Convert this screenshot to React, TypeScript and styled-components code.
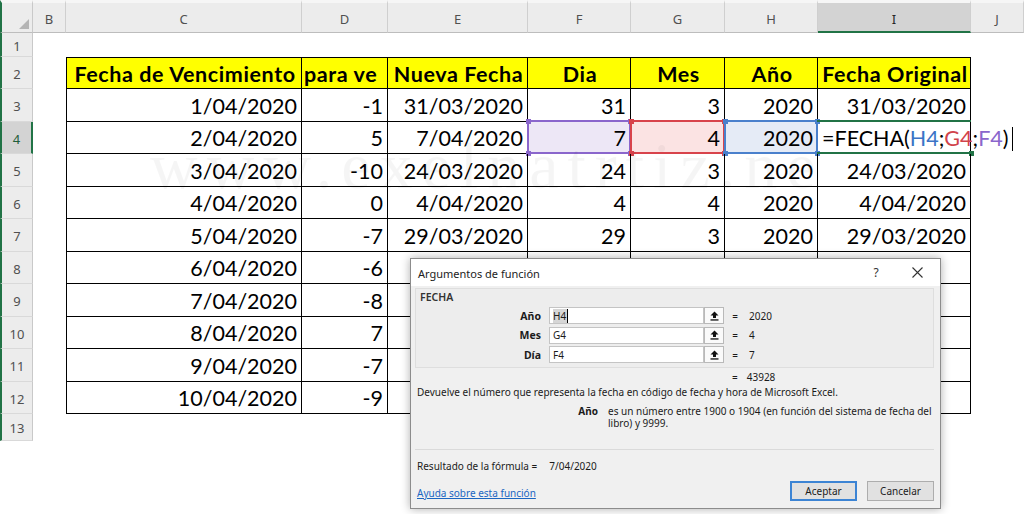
import React from 'react';
import styled, { createGlobalStyle, css } from 'styled-components';

const GlobalStyle = createGlobalStyle`
  html, body { margin: 0; padding: 0; background: #fff; }
  body { width: 1024px; height: 514px; overflow: hidden; font-family: Lato, "Liberation Sans", sans-serif; }
`;

const COLS = '33px 33px 236px 86px 140px 103px 94px 93px 153px 53px';
const ROWS = '33px 24px 32px 33px 32px 33px 32px 33px 32px 33px 32px 33px 32px 27px';
const GREEN = '#217346';

const Page = styled.div`
  position: relative;
  width: 1024px;
  height: 514px;
  overflow: hidden;
  background: #fff;
`;

const Sheet = styled.div`
  display: grid;
  grid-template-columns: ${COLS};
  grid-template-rows: ${ROWS};
`;

const Corner = styled.div`
  position: relative;
  box-sizing: border-box;
  background: #ececec;
  border-left: 2px solid ${GREEN};
  border-right: 1px solid #c9c9c9;
  border-bottom: 1px solid #bdbdbd;
  border-top: 3px solid #f6f6f6;
`;

const CornerTriangle = styled.svg`
  position: absolute;
  right: 3px;
  bottom: 3px;
`;

const ColHeader = styled.div<{ $active?: boolean }>`
  box-sizing: border-box;
  display: flex;
  align-items: center;
  justify-content: center;
  padding-top: 3px;
  background: ${p => (p.$active ? '#d3d3d3' : '#ececec')};
  border-top: 3px solid #f6f6f6;
  border-right: 1px solid #cfcfcf;
  border-bottom: ${p => (p.$active ? `2px solid ${GREEN}` : '1px solid #bdbdbd')};
  font-family: "Noto Sans", "Open Sans", sans-serif;
  font-size: 13px;
  color: ${p => (p.$active ? '#262626' : '#505050')};
  white-space: nowrap;
  overflow: hidden;
`;

const RowHeader = styled.div<{ $active?: boolean }>`
  box-sizing: border-box;
  display: flex;
  align-items: center;
  justify-content: center;
  padding-top: 2px;
  background: ${p => (p.$active ? '#d3d3d3' : '#ececec')};
  border-left: 2px solid ${GREEN};
  border-right: ${p => (p.$active ? `2px solid ${GREEN}` : '1px solid #c9c9c9')};
  border-bottom: 1px solid #d9d9d9;
  font-family: "Noto Sans", "Open Sans", sans-serif;
  font-size: 13px;
  color: ${p => (p.$active ? '#1f5e3a' : '#505050')};
`;

type Align = 'left' | 'right' | 'center';

const Cell = styled.div<{
  $table?: boolean;
  $first?: boolean;
  $topRow?: boolean;
  $head?: boolean;
  $align?: Align;
  $fill?: string;
}>`
  position: relative;
  box-sizing: border-box;
  display: flex;
  align-items: center;
  justify-content: ${p => (p.$align === 'left' ? 'flex-start' : p.$align === 'center' ? 'center' : 'flex-end')};
  padding: ${p => (p.$head ? '1px 0 0 2px' : '1px 4px 0 4px')};
  font-size: 21.5px;
  color: #000;
  white-space: nowrap;
  background: ${p => p.$fill || (p.$head ? '#ffff00' : 'transparent')};
  font-weight: ${p => (p.$head ? 700 : 400)};
  letter-spacing: ${p => (p.$head ? '0.6px' : '0')};
  ${p =>
    p.$table &&
    css`
      border-right: 1px solid #000;
      border-bottom: 1px solid #000;
    `}
  ${p =>
    p.$first &&
    css`
      border-left: 1px solid #000;
    `}
  ${p =>
    p.$topRow &&
    css`
      border-top: 1px solid #000;
    `}
`;

const Clip = styled.span`
  overflow: hidden;
  display: block;
`;

const RefFrame = styled.div<{ $color: string }>`
  position: absolute;
  top: -2px;
  left: -1px;
  right: -1px;
  bottom: -1px;
  border: 2px solid ${p => p.$color};
  pointer-events: none;
`;

const Handle = styled.div<{ $color: string; $v: 'top' | 'bottom'; $h: 'left' | 'right' }>`
  position: absolute;
  width: 5px;
  height: 5px;
  background: ${p => p.$color};
  ${p => (p.$v === 'top' ? 'top: -3.5px;' : 'bottom: -3.5px;')}
  ${p => (p.$h === 'left' ? 'left: -3.5px;' : 'right: -3.5px;')}
`;

const EditFrame = styled.div`
  position: absolute;
  top: -2px;
  left: -1px;
  right: -1px;
  bottom: -1px;
  border-top: 2px solid ${GREEN};
  border-bottom: 2px solid ${GREEN};
  pointer-events: none;
`;

const EditHandle = styled.div`
  position: absolute;
  right: -3px;
  bottom: -4px;
  width: 5px;
  height: 5px;
  background: ${GREEN};
`;

const Formula = styled.span`
  position: relative;
  z-index: 2;
  overflow: visible;
`;

const Tok = styled.span<{ $c?: string }>`
  color: ${p => p.$c || '#000'};
`;

const Caret = styled.span`
  display: inline-block;
  width: 1.5px;
  height: 24px;
  margin-left: 3px;
  background: #000;
  vertical-align: -5px;
`;

const Watermark = styled.div`
  position: absolute;
  left: 150px;
  top: 128px;
  font-family: "Liberation Serif", "DejaVu Serif", serif;
  font-size: 66px;
  letter-spacing: 9px;
  color: rgba(0, 0, 0, 0.04);
  pointer-events: none;
  white-space: nowrap;
`;

/* ---------- Dialog ---------- */

const Dialog = styled.div`
  position: absolute;
  left: 410px;
  top: 258px;
  width: 531px;
  height: 251px;
  box-sizing: border-box;
  border: 1px solid #8c8c8c;
  background: #f0f0f0;
  box-shadow: 0 0 9px rgba(0, 0, 0, 0.32);
  font-family: "Noto Sans", "Open Sans", sans-serif;
  font-size: 10px;
  color: #1b1b1b;
  display: flex;
  flex-direction: column;
  z-index: 5;
`;

const TitleBar = styled.div`
  height: 27px;
  background: #fff;
  display: flex;
  align-items: center;
  padding-left: 7px;
  font-size: 11px;
  color: #222;
`;

const TitleText = styled.div`
  flex: 1;
  padding-top: 1px;
`;

const TitleButton = styled.div<{ $w: number }>`
  width: ${p => p.$w}px;
  height: 27px;
  display: flex;
  align-items: center;
  justify-content: center;
  color: #333;
  font-size: 12px;
`;

const Body = styled.div`
  flex: 1;
  display: flex;
  flex-direction: column;
  padding: 2px 6px 7px 4px;
`;

const Group = styled.div`
  height: 80px;
  box-sizing: border-box;
  border: 1px solid #dedede;
  background: #ededed;
  display: flex;
  flex-direction: column;
`;

const GroupLabel = styled.div`
  height: 17px;
  padding: 1px 0 0 4px;
  box-sizing: border-box;
  font-weight: 600;
  font-size: 10.5px;
  color: #333;
`;

const ArgList = styled.div`
  display: flex;
  flex-direction: column;
  gap: 2.5px;
  padding-top: 1px;
`;

const ArgRow = styled.div`
  display: grid;
  grid-template-columns: 133px 155px 20px 20px auto;
  align-items: center;
  height: 17px;
`;

const ArgLabel = styled.div`
  text-align: right;
  padding-right: 8px;
  font-weight: 700;
  font-size: 10.5px;
`;

const ArgInput = styled.div`
  box-sizing: border-box;
  height: 17px;
  background: #fff;
  border: 1px solid #c4c4c4;
  display: flex;
  align-items: center;
  padding-left: 3px;
  font-size: 10px;
`;

const Sel = styled.span`
  background: #d6d6d6;
  padding-right: 1px;
  border-right: 1px solid #000;
`;

const RefBtn = styled.div`
  box-sizing: border-box;
  height: 17px;
  border: 1px solid #b9b9b9;
  background: #fafafa;
  display: flex;
  align-items: center;
  justify-content: center;
`;

const Eq = styled.div`
  text-align: center;
  padding-left: 2px;
`;

const ArgValue = styled.div`
  padding-left: 5px;
`;

const ValueLine = styled.div`
  margin-top: 2px;
  height: 14px;
  display: flex;
  align-items: center;
  padding-left: 317px;
  gap: 9px;
`;

const Description = styled.div`
  height: 14px;
  margin-top: 1px;
  padding-left: 2px;
  display: flex;
  align-items: center;
  white-space: nowrap;
`;

const ArgHelp = styled.div`
  margin-top: 6px;
  display: grid;
  grid-template-columns: 183px auto;
  column-gap: 10px;
  line-height: 12px;
`;

const ArgHelpName = styled.div`
  text-align: right;
  font-weight: 700;
`;

const ArgHelpText = styled.div`
  white-space: nowrap;
`;

const Separator = styled.div`
  margin-top: 20px;
  height: 1px;
  background: #dadada;
`;

const ResultLine = styled.div`
  margin-top: 9px;
  height: 14px;
  padding-left: 2px;
  display: flex;
  align-items: center;
  gap: 12px;
`;

const Footer = styled.div`
  margin-top: 8px;
  display: flex;
  align-items: center;
  gap: 10px;
`;

const HelpLink = styled.a`
  flex: 1;
  padding-left: 2px;
  padding-top: 3px;
  color: #1a66c2;
  text-decoration: underline;
`;

const Button = styled.div<{ $primary?: boolean }>`
  width: 67px;
  height: 20px;
  box-sizing: border-box;
  display: flex;
  align-items: center;
  justify-content: center;
  background: #e1e1e1;
  border: ${p => (p.$primary ? '2px solid #3c84d4' : '1px solid #adadad')};
  color: #1b1b1b;
`;

const UpArrow = () => (
  <svg width="9" height="10" viewBox="0 0 9 10">
    <path d="M4.5 0.5 L8.5 4.5 H6 V7 H3 V4.5 H0.5 Z" fill="#111" />
    <rect x="0.5" y="8.3" width="8" height="1.3" fill="#111" />
  </svg>
);

const CloseIcon = () => (
  <svg width="11" height="11" viewBox="0 0 11 11">
    <path d="M0.5 0.5 L10.5 10.5 M10.5 0.5 L0.5 10.5" stroke="#333" strokeWidth="1.1" />
  </svg>
);

/* ---------- Data ---------- */

const COL_LETTERS = ['B', 'C', 'D', 'E', 'F', 'G', 'H', 'I', 'J'];

const headers = ['Fecha de Vencimiento', 'para ve', 'Nueva Fecha', 'Dia', 'Mes', 'Año', 'Fecha Original'];

const cColumn = [
  '1/04/2020', '2/04/2020', '3/04/2020', '4/04/2020', '5/04/2020',
  '6/04/2020', '7/04/2020', '8/04/2020', '9/04/2020', '10/04/2020',
];
const dColumn = ['-1', '5', '-10', '0', '-7', '-6', '-8', '7', '-7', '-9'];
const eColumn = ['31/03/2020', '7/04/2020', '24/03/2020', '4/04/2020', '29/03/2020'];
const fColumn = ['31', '7', '24', '4', '29'];
const gColumn = ['3', '4', '3', '4', '3'];
const hColumn = ['2020', '2020', '2020', '2020', '2020'];
const iColumn = ['31/03/2020', '', '24/03/2020', '4/04/2020', '29/03/2020'];

const refs: Record<string, { line: string; fill: string }> = {
  F: { line: '#8a66cc', fill: '#ede7f6' },
  G: { line: '#d8434b', fill: '#fbe3e3' },
  H: { line: '#4a80cc', fill: '#e5ebf6' },
};

const RefBox = ({ color }: { color: string }) => (
  <RefFrame $color={color}>
    <Handle $color={color} $v="top" $h="left" />
    <Handle $color={color} $v="top" $h="right" />
    <Handle $color={color} $v="bottom" $h="left" />
    <Handle $color={color} $v="bottom" $h="right" />
  </RefFrame>
);

function valueFor(col: string, row: number): string {
  const i = row - 3;
  switch (col) {
    case 'C': return cColumn[i] ?? '';
    case 'D': return dColumn[i] ?? '';
    case 'E': return eColumn[i] ?? '';
    case 'F': return fColumn[i] ?? '';
    case 'G': return gColumn[i] ?? '';
    case 'H': return hColumn[i] ?? '';
    case 'I': return iColumn[i] ?? '';
    default: return '';
  }
}

const TABLE_COLS = ['C', 'D', 'E', 'F', 'G', 'H', 'I'];

function renderRow(row: number) {
  const cells: React.ReactNode[] = [];
  cells.push(
    <RowHeader key={`rh${row}`} $active={row === 4}>
      {row}
    </RowHeader>
  );
  cells.push(<Cell key={`B${row}`} />);
  TABLE_COLS.forEach((col, ci) => {
    const key = `${col}${row}`;
    if (row < 2 || row > 12) {
      cells.push(<Cell key={key} />);
      return;
    }
    if (row === 2) {
      cells.push(
        <Cell key={key} $table $head $first={ci === 0} $topRow $align={col === 'D' ? 'left' : 'center'}>
          <Clip>{headers[ci]}</Clip>
        </Cell>
      );
      return;
    }
    if (row === 4 && refs[col]) {
      cells.push(
        <Cell key={key} $table $first={ci === 0} $fill={refs[col].fill}>
          {valueFor(col, row)}
          <RefBox color={refs[col].line} />
        </Cell>
      );
      return;
    }
    if (row === 4 && col === 'I') {
      cells.push(
        <Cell key={key} $table $align="left">
          <EditFrame>
            <EditHandle />
          </EditFrame>
          <Formula>
            <Tok>=FECHA(</Tok>
            <Tok $c="#3b74c6">H4</Tok>
            <Tok>;</Tok>
            <Tok $c="#d1434b">G4</Tok>
            <Tok>;</Tok>
            <Tok $c="#8a66cc">F4</Tok>
            <Tok>)</Tok>
            <Caret />
          </Formula>
        </Cell>
      );
      return;
    }
    cells.push(
      <Cell key={key} $table $first={ci === 0}>
        {row >= 8 && ci >= 2 ? '' : valueFor(col, row)}
      </Cell>
    );
  });
  cells.push(<Cell key={`J${row}`} />);
  return cells;
}

export default function App() {
  const rows = Array.from({ length: 13 }, (_, i) => i + 1);
  return (
    <Page>
      <GlobalStyle />
      <Sheet>
        <Corner>
          <CornerTriangle width="10" height="10" viewBox="0 0 10 10">
            <path d="M10 0 L10 10 L0 10 Z" fill="#b5b5b5" />
          </CornerTriangle>
        </Corner>
        {COL_LETTERS.map(l => (
          <ColHeader key={l} $active={l === 'I'}>
            {l}
          </ColHeader>
        ))}
        {rows.map(r => renderRow(r))}
      </Sheet>

      <Watermark>www.exelnatrtiz.ne</Watermark>

      <Dialog>
        <TitleBar>
          <TitleText>Argumentos de función</TitleText>
          <TitleButton $w={24}>?</TitleButton>
          <TitleButton $w={6} />
          <TitleButton $w={46}>
            <CloseIcon />
          </TitleButton>
        </TitleBar>
        <Body>
          <Group>
            <GroupLabel>FECHA</GroupLabel>
            <ArgList>
              <ArgRow>
                <ArgLabel>Año</ArgLabel>
                <ArgInput>
                  <Sel>H4</Sel>
                </ArgInput>
                <RefBtn>
                  <UpArrow />
                </RefBtn>
                <Eq>=</Eq>
                <ArgValue>2020</ArgValue>
              </ArgRow>
              <ArgRow>
                <ArgLabel>Mes</ArgLabel>
                <ArgInput>G4</ArgInput>
                <RefBtn>
                  <UpArrow />
                </RefBtn>
                <Eq>=</Eq>
                <ArgValue>4</ArgValue>
              </ArgRow>
              <ArgRow>
                <ArgLabel>Día</ArgLabel>
                <ArgInput>F4</ArgInput>
                <RefBtn>
                  <UpArrow />
                </RefBtn>
                <Eq>=</Eq>
                <ArgValue>7</ArgValue>
              </ArgRow>
            </ArgList>
          </Group>
          <ValueLine>
            <span>=</span>
            <span>43928</span>
          </ValueLine>
          <Description>
            Devuelve el número que representa la fecha en código de fecha y hora de Microsoft Excel.
          </Description>
          <ArgHelp>
            <ArgHelpName>Año</ArgHelpName>
            <ArgHelpText>
              es un número entre 1900 o 1904 (en función del sistema de fecha del
              <br />
              libro) y 9999.
            </ArgHelpText>
          </ArgHelp>
          <Separator />
          <ResultLine>
            <span>Resultado de la fórmula =</span>
            <span>7/04/2020</span>
          </ResultLine>
          <Footer>
            <HelpLink>Ayuda sobre esta función</HelpLink>
            <Button $primary>Aceptar</Button>
            <Button>Cancelar</Button>
          </Footer>
        </Body>
      </Dialog>
    </Page>
  );
}
